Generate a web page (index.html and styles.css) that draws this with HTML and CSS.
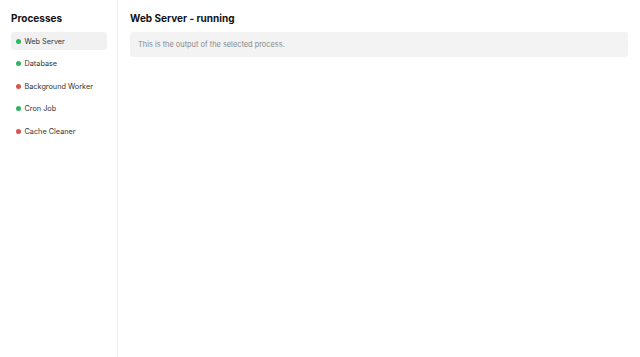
FILE: index.html
```html
<!DOCTYPE html>
<html>
<head>
    <meta charset="UTF-8">
    <title>Processes</title>
    <link rel="stylesheet" href="styles.css">
</head>
<body>

    <!-- Danh sách tiến trình -->
    <div class="sidebar">
        <h3>Processes</h3>
        <ul class="process-list">
            <li class="active"><span class="dot running"></span>Web Server</li>
            <li><span class="dot running"></span>Database</li>
            <li><span class="dot stopped"></span>Background Worker</li>
            <li><span class="dot running"></span>Cron Job</li>
            <li><span class="dot stopped"></span>Cache Cleaner</li>
        </ul>
    </div>

    <!-- Output -->
    <div class="content">
        <h3>Web Server - running</h3>
        <div class="output">This is the output of the selected process.</div>
    </div>

</body>
</html>
```

FILE: styles.css
```css
body {
    font-family: 'Inter', sans-serif;
    margin: 0;
    padding: 0;
    display: flex;
    height: 357px;
    background-color: #fff;
    color: #111;
}
h3 {
    font-size: 10px;
    font-weight: 700;
    line-height: 12px;
    margin: 0 0 8px 0;
}
.sidebar {
    width: 96px;
    padding: 12px 10px 12px 11px;
    border-right: 1px solid #f0f0f0;
    flex-shrink: 0;
}
.process-list {
    list-style: none;
    margin: 0;
    padding: 0;
    display: flex;
    flex-direction: column;
    gap: 4.5px;
}
.process-list li {
    display: flex;
    align-items: center;
    height: 18px;
    padding: 0 5px;
    font-size: 7.3px;
    color: #333;
    border-radius: 3px;
}
.process-list li.active {
    background-color: #f1f1f1;
}
.dot {
    width: 5px;
    height: 5px;
    border-radius: 50%;
    margin-right: 3.5px;
    flex-shrink: 0;
}
.dot.running {
    background-color: #2fb463;
}
.dot.stopped {
    background-color: #d9534f;
}
.content {
    flex: 1;
    padding: 12px;
}
.output {
    background-color: #f3f3f3;
    border-radius: 3px;
    padding: 8px;
    font-size: 7.4px;
    line-height: 9px;
    color: #888;
}
```
